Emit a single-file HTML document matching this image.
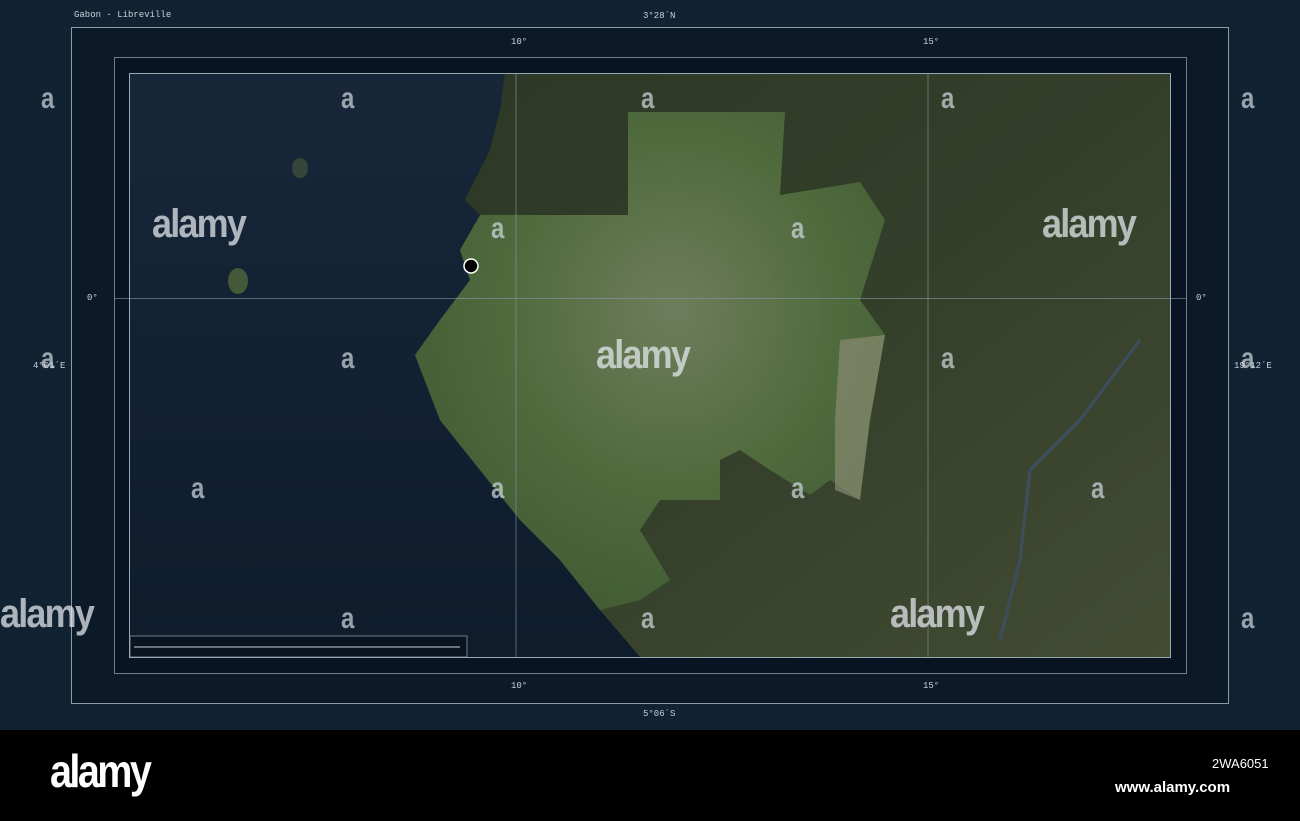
<!DOCTYPE html>
<html><head><style>
body{margin:0;width:1300px;height:821px;overflow:hidden;background:#000;font-family:"Liberation Mono",monospace;}
.top{position:absolute;left:0;top:0;width:1300px;height:730px;background:#112232;}
.t{position:absolute;color:#c8d2dc;font-size:9px;}
.wm{position:absolute;color:rgba(225,230,235,0.75);font-family:"Liberation Sans",sans-serif;font-weight:bold;transform:scaleX(0.9);transform-origin:left top;}
.a{position:absolute;color:rgba(210,218,225,0.7);font-family:"Liberation Sans",sans-serif;font-weight:bold;font-size:30px;transform:scaleX(0.8);transform-origin:left top;}
</style></head><body>
<div class="top">
<div style="position:absolute;left:71px;top:27px;width:1156px;height:675px;border:1px solid #8a9cab;background:#0c1a28"></div>
<div style="position:absolute;left:114px;top:57px;width:1071px;height:615px;border:1px solid #6d7f8e;background:#081421"></div>
<svg style="position:absolute;left:129px;top:73px" width="1041" height="584" viewBox="129 73 1041 584">
<defs>
<linearGradient id="oc" x1="0" y1="0" x2="0" y2="1"><stop offset="0" stop-color="#172739"/><stop offset="1" stop-color="#0e1c2c"/></linearGradient>
<linearGradient id="ld" x1="0" y1="0" x2="1" y2="1"><stop offset="0" stop-color="#2c3825"/><stop offset="0.5" stop-color="#343f2a"/><stop offset="1" stop-color="#434b33"/></linearGradient>
<radialGradient id="gb" cx="0.55" cy="0.4" r="0.6"><stop offset="0" stop-color="#6e7d5c"/><stop offset="0.6" stop-color="#4f6a3d"/><stop offset="1" stop-color="#435e35"/></radialGradient>
</defs>
<rect x="129" y="73" width="1041" height="584" fill="url(#oc)"/>
<path d="M505 73 L1170 73 L1170 657 L640 657 L600 610 L560 560 L520 520 L480 470 L440 420 L415 355 L440 320 L470 280 L460 250 L480 215 L465 200 L490 150 L500 110 Z" fill="url(#ld)"/>
<path d="M628 112 L785 112 L780 195 L860 182 L885 220 L860 300 L885 335 L870 420 L860 500 L830 480 L810 495 L770 470 L740 450 L720 460 L720 500 L660 500 L640 530 L670 580 L640 600 L600 610 L560 560 L520 520 L480 470 L440 420 L415 355 L440 320 L470 280 L460 250 L480 215 L628 215 Z" fill="url(#gb)"/>
<path d="M840 340 L885 335 L870 420 L860 500 L835 490 L835 420 Z" fill="#8a8a72" opacity="0.7"/>
<path d="M1140 340 L1080 420 L1030 470 L1020 560 L1000 640" stroke="#3c4e60" stroke-width="3" fill="none"/>
<ellipse cx="300" cy="168" rx="8" ry="10" fill="#35463a"/>
<ellipse cx="238" cy="281" rx="10" ry="13" fill="#44583a"/>
<line x1="516" y1="73" x2="516" y2="657" stroke="#8898a8" stroke-width="1" opacity="0.6"/>
<line x1="928" y1="73" x2="928" y2="657" stroke="#8898a8" stroke-width="1" opacity="0.6"/>
<rect x="130" y="636" width="337" height="21" fill="#0a1420" stroke="#6d7f8e" stroke-width="1"/>
<line x1="134" y1="647" x2="460" y2="647" stroke="#ccd" stroke-width="1"/>
<circle cx="471" cy="266" r="7" fill="#000" stroke="#fff" stroke-width="1.5"/>
</svg>
<div style="position:absolute;left:114px;top:298px;width:1072px;height:1px;background:#8898a8;opacity:.6"></div>
<div style="position:absolute;left:129px;top:73px;width:1040px;height:583px;border:1px solid #9aa8b4"></div>
<div class="t" style="left:74px;top:10px">Gabon - Libreville</div>
<div class="t" style="left:643px;top:11px">3°28´N</div>
<div class="t" style="left:643px;top:709px">5°06´S</div>
<div class="t" style="left:511px;top:37px">10°</div>
<div class="t" style="left:923px;top:37px">15°</div>
<div class="t" style="left:511px;top:681px">10°</div>
<div class="t" style="left:923px;top:681px">15°</div>
<div class="t" style="left:87px;top:293px">0°</div>
<div class="t" style="left:1196px;top:293px">0°</div>
<div class="t" style="left:33px;top:361px">4°01´E</div>
<div class="t" style="left:1234px;top:361px">19°12´E</div>
<div class="a" style="left:41px;top:82px">a</div><div class="a" style="left:341px;top:82px">a</div><div class="a" style="left:641px;top:82px">a</div><div class="a" style="left:941px;top:82px">a</div><div class="a" style="left:1241px;top:82px">a</div>
<div class="a" style="left:491px;top:212px">a</div><div class="a" style="left:791px;top:212px">a</div>
<div class="a" style="left:41px;top:342px">a</div><div class="a" style="left:341px;top:342px">a</div><div class="a" style="left:941px;top:342px">a</div><div class="a" style="left:1241px;top:342px">a</div>
<div class="a" style="left:191px;top:472px">a</div><div class="a" style="left:491px;top:472px">a</div><div class="a" style="left:791px;top:472px">a</div><div class="a" style="left:1091px;top:472px">a</div>
<div class="a" style="left:341px;top:602px">a</div><div class="a" style="left:641px;top:602px">a</div><div class="a" style="left:1241px;top:602px">a</div>
<div class="wm" style="left:152px;top:202px;font-size:40px;letter-spacing:-2px">alamy</div>
<div class="wm" style="left:1042px;top:202px;font-size:40px;letter-spacing:-2px">alamy</div>
<div class="wm" style="left:596px;top:333px;font-size:40px;letter-spacing:-2px">alamy</div>
<div class="wm" style="left:890px;top:592px;font-size:40px;letter-spacing:-2px">alamy</div>
<div class="wm" style="left:0px;top:592px;font-size:40px;letter-spacing:-2px">alamy</div>
</div>
<div style="position:absolute;left:50px;top:744px;color:#fff;font-family:'Liberation Sans',sans-serif;font-weight:bold;font-size:46px;letter-spacing:-3px;transform:scaleX(0.86);transform-origin:left top">alamy</div>
<div style="position:absolute;left:1115px;top:779px;color:#fff;font-family:'Liberation Sans',sans-serif;font-weight:bold;font-size:15px">www.alamy.com</div>
<div style="position:absolute;left:1212px;top:756px;color:#fff;font-family:'Liberation Sans',sans-serif;font-size:13px">2WA6051</div>
</body></html>
